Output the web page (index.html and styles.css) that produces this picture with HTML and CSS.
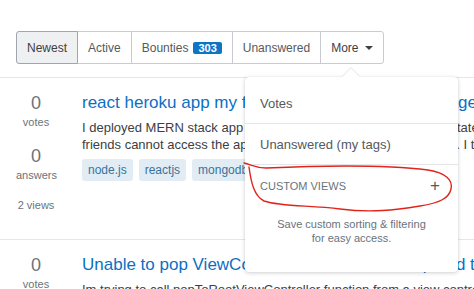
FILE: index.html
```html
<!DOCTYPE html>
<html>
<head>
<meta charset="utf-8">
<link rel="stylesheet" href="styles.css">
</head>
<body>
<div class="page">
  <div class="filters">
    <div class="btn-group">
      <span class="btn is-selected">Newest</span>
      <span class="btn">Active</span>
      <span class="btn">Bounties <span class="badge">303</span></span>
      <span class="btn">Unanswered</span>
      <span class="btn btn-more">More <span class="caret"></span></span>
    </div>
  </div>

  <div class="question">
    <div class="stats">
      <div class="num">0</div>
      <div class="label">votes</div>
      <div class="num num-gap">0</div>
      <div class="label">answers</div>
      <div class="views">2 views</div>
    </div>
    <div class="summary">
      <div class="title">react heroku app my friends cannot access the page</div>
      <div class="excerpt">I deployed MERN stack app to heroku and it works on my local, state of the app<br>friends cannot access the app on other devices, they see nothing. I tried</div>
      <div class="tags">
        <span class="tag">node.js</span>
        <span class="tag">reactjs</span>
        <span class="tag">mongodb</span>
      </div>
    </div>
  </div>

  <div class="question">
    <div class="stats">
      <div class="num">0</div>
      <div class="label">votes</div>
    </div>
    <div class="summary">
      <div class="title">Unable to pop ViewController with a button tap and then go back</div>
      <div class="excerpt">Im trying to call popToRootViewController function from a view controller</div>
    </div>
  </div>

  <div class="popover">
    <div class="pop-item">Votes</div>
    <div class="pop-item">Unanswered (my tags)</div>
    <div class="pop-head"><span>Custom views</span><span class="plus">+</span></div>
    <div class="pop-note">Save custom sorting &amp; filtering<br>for easy access.</div>
  </div>

  <svg class="annotation" width="474" height="289" viewBox="0 0 474 289">
    <path d="M244,163 C252,165 256,168 266,168 C310,166 380,164 428,170 C446,173 453,180 451,189 C449,198 440,203 420,206 C395,210 372,213 340,209 C310,205 282,207 264,201 C254,196 251,182 249,167" fill="none" stroke="#e2231a" stroke-width="1.4" stroke-linecap="round"/>
  </svg>
</div>
</body>
</html>
```

FILE: styles.css
```css
* { box-sizing: border-box; }
html, body { margin: 0; padding: 0; background: #fff; }
body { font-family: "Liberation Sans", Arial, sans-serif; }

.page {
  position: relative;
  width: 474px;
  height: 289px;
  overflow: hidden;
}

.filters {
  height: 78px;
  padding: 31px 0 0 16px;
  border-bottom: 1px solid #e4e6e8;
}

.btn-group { display: flex; }

.btn {
  display: flex;
  align-items: center;
  gap: 5px;
  height: 33px;
  padding: 0 10px;
  margin-left: -1px;
  border: 1px solid #c8ccd0;
  background: #fff;
  color: #535a60;
  font-size: 12px;
}
.btn:first-child { margin-left: 0; border-radius: 3px 0 0 3px; }
.btn:last-child { border-radius: 0 3px 3px 0; }
.btn.is-selected {
  background: #eff0f1;
  border-color: #9fa6ad;
  color: #3b4045;
  position: relative;
  z-index: 1;
}
.btn-more { color: #3b4045; gap: 7px; }

.badge {
  background: #0c76c6;
  color: #fff;
  font-weight: bold;
  font-size: 11px;
  line-height: 12px;
  padding: 0 5px;
  border-radius: 2px;
}

.caret {
  width: 0;
  height: 0;
  border-left: 4px solid transparent;
  border-right: 4px solid transparent;
  border-top: 4px solid #3b4045;
}

.question {
  display: flex;
  height: 162px;
  padding: 14px 0 0 16px;
  border-bottom: 1px solid #e4e6e8;
}

.stats {
  flex: none;
  width: 40px;
  text-align: center;
  color: #6a737c;
}
.num { font-size: 18px; line-height: 22px; }
.num-gap { margin-top: 15px; }
.label { font-size: 11px; line-height: 16px; }
.views { font-size: 11px; line-height: 16px; margin-top: 14px; color: #6a737c; }

.summary {
  margin-left: 26px;
  white-space: nowrap;
}
.title {
  font-size: 17px;
  line-height: 22px;
  color: #0c6fc4;
}
.excerpt {
  margin-top: 5px;
  font-size: 13px;
  line-height: 17px;
  color: #3b4045;
}
.tags {
  display: flex;
  gap: 6px;
  margin-top: 6px;
}
.tag {
  height: 22px;
  line-height: 22px;
  padding: 0 6px;
  background: #e1ecf4;
  color: #39739d;
  font-size: 12px;
  border-radius: 3px;
}

.popover {
  position: absolute;
  left: 245px;
  top: 77px;
  width: 213px;
  padding-top: 6px;
  background: #fff;
  border-radius: 4px;
  box-shadow: 0 1px 4px rgba(0, 0, 0, 0.18), 0 0 1px rgba(0, 0, 0, 0.12);
}
.popover::before {
  content: "";
  position: absolute;
  top: -6px;
  left: 100px;
  width: 12px;
  height: 12px;
  background: #fff;
  transform: rotate(45deg);
  box-shadow: -1px -1px 1px rgba(0, 0, 0, 0.08);
}
.pop-item {
  position: relative;
  height: 41px;
  display: flex;
  align-items: center;
  padding: 0 15px;
  border-bottom: 1px solid #e4e6e8;
  font-size: 13px;
  color: #535a60;
}
.pop-head {
  height: 41px;
  display: flex;
  align-items: center;
  justify-content: space-between;
  padding: 0 18px 0 15px;
  font-size: 11px;
  text-transform: uppercase;
  color: #6a737c;
}
.plus { font-size: 17px; color: #535a60; }
.pop-note {
  padding: 11px 15px 27px;
  text-align: center;
  font-size: 11px;
  line-height: 14px;
  color: #6a737c;
}

.annotation {
  position: absolute;
  left: 0;
  top: 0;
  pointer-events: none;
}
```
